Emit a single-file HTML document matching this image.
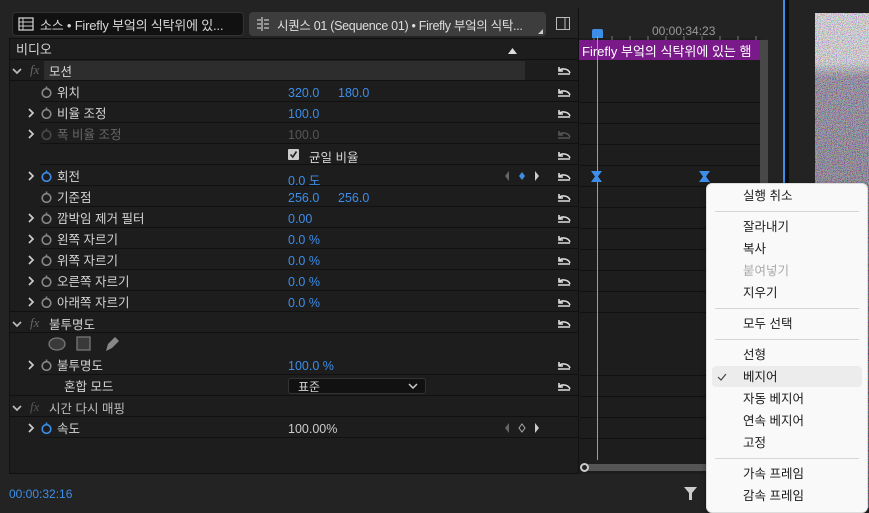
<!DOCTYPE html>
<html><head><meta charset="utf-8"><style>
*{margin:0;padding:0;box-sizing:border-box}
body{width:869px;height:508px;background:#232323;position:relative;overflow:hidden;font-family:"Liberation Sans","Noto Sans CJK KR",sans-serif;font-size:12.5px;color:#d4d4d4}
.a{position:absolute;white-space:nowrap}
.row{position:absolute;left:40px;width:538px;height:21px;border-bottom:1px solid #111}
.blue{color:#3d8ee8}
.rs{position:absolute;left:556px;width:16px;height:12px}
.sw{position:absolute;width:11px;height:12px}
.ch{position:absolute;left:27px;width:8px;height:10px}
.dn{position:absolute;left:12px;width:10px;height:8px}
.hl{position:absolute;left:580px;width:180px;height:1px;background:#111}
.mi{position:absolute;left:743px;color:#1a1a1a;font-size:12.5px}
.sep{position:absolute;left:715px;width:144px;height:1px;background:#d6d6d6}
</style></head><body>
<svg width="0" height="0" style="position:absolute"><defs>
<g id="sw"><circle cx="5.5" cy="7" r="4.3" fill="none" stroke="currentColor" stroke-width="1.6"/><line x1="5.5" y1="0.5" x2="5.5" y2="3" stroke="currentColor" stroke-width="1.6"/></g>
<g id="rs"><path d="M2 9H14M3 2V6H7M3 6C5 3 12 3 14 8" fill="none" stroke="currentColor" stroke-width="1.6"/></g>
<g id="ch"><path d="M2 1L6 5L2 9" fill="none" stroke="#ccc" stroke-width="1.7"/></g>
<g id="dn"><path d="M1 2L5 6L9 2" fill="none" stroke="#bbb" stroke-width="1.7"/></g>
</defs></svg>
<!-- top tabs -->
<div class="a" style="left:12px;top:12px;width:232px;height:24px;background:#111;border:1px solid #333;border-radius:4px"></div>
<svg class="a" style="left:18px;top:17px" width="16" height="14"><rect x="1" y="1" width="14" height="12" fill="none" stroke="#ccc" stroke-width="1.3"/><line x1="1" y1="5" x2="15" y2="5" stroke="#ccc"/><line x1="5" y1="1" x2="5" y2="13" stroke="#ccc"/><line x1="1" y1="9" x2="15" y2="9" stroke="#ccc"/></svg>
<div class="a" style="left:40px;top:15px;color:#d8d8d8;font-size:13px;letter-spacing:-0.2px">소스 • Firefly 부엌의 식탁위에 있...</div>
<div class="a" style="left:249px;top:12px;width:297px;height:24px;background:#3d3d3d;border-radius:4px"></div>
<svg class="a" style="left:256px;top:17px" width="14" height="14"><g stroke="#ccc" stroke-width="1.2"><line x1="6" y1="0" x2="6" y2="14"/><line x1="1" y1="3" x2="5" y2="3"/><line x1="8" y1="3" x2="13" y2="3"/><line x1="1" y1="7" x2="5" y2="7"/><line x1="8" y1="7" x2="13" y2="7"/><line x1="1" y1="11" x2="5" y2="11"/><line x1="8" y1="11" x2="13" y2="11"/></g></svg>
<div class="a" style="left:277px;top:15px;color:#dedede;font-size:12.5px;letter-spacing:-0.3px">시퀀스 01 (Sequence 01) • Firefly 부엌의 식탁...</div>
<svg class="a" style="left:538px;top:29px" width="5" height="5"><path d="M5 0L5 5L0 5Z" fill="#ccc"/></svg>
<svg class="a" style="left:556px;top:17px" width="14" height="13"><rect x="0.5" y="0.5" width="13" height="12" fill="none" stroke="#bbb"/><line x1="9" y1="0" x2="9" y2="13" stroke="#bbb"/></svg>
<!-- main panel -->
<div class="a" style="left:9px;top:38px;width:570px;height:436px;background:#1d1d1d;border:1px solid #111"></div>
<div class="a" style="left:9px;top:38px;width:570px;height:22px;border-bottom:1px solid #111"></div>
<div class="a" style="left:16px;top:39px;font-size:13px">비디오</div>
<svg class="a" style="left:508px;top:48px" width="9" height="6"><path d="M0 6L4.5 0L9 6Z" fill="#ddd"/></svg>
<div class="a" style="left:44px;top:61px;width:481px;height:19px;background:#2d2d2d"></div>
<div class="a" style="left:10px;top:80px;width:568px;height:1px;background:#111"></div>
<div class="row" style="top:81px"></div><div class="row" style="top:102px"></div><div class="row" style="top:123px"></div><div class="row" style="top:144px"></div><div class="row" style="top:165px"></div><div class="row" style="top:186px"></div><div class="row" style="top:207px"></div><div class="row" style="top:228px"></div><div class="row" style="top:249px"></div><div class="row" style="top:270px"></div><div class="row" style="top:291px;left:10px;width:568px"></div>
<div class="row" style="top:312px;left:10px;width:568px"></div>
<div class="row" style="top:354px"></div><div class="row" style="top:375px;left:10px;width:568px"></div><div class="row" style="top:396px;left:10px;width:568px"></div><div class="row" style="top:417px"></div>
<!-- headers -->
<svg class="dn" style="top:67px"><use href="#dn"/></svg>
<div class="a" style="left:30px;top:62px;color:#666;font-style:italic;font-family:'Liberation Serif',serif;font-size:13px">fx</div>
<div class="a" style="left:49px;top:61px">모션</div>
<svg class="dn" style="top:320px"><use href="#dn"/></svg>
<div class="a" style="left:30px;top:315px;color:#666;font-style:italic;font-family:'Liberation Serif',serif;font-size:13px">fx</div>
<div class="a" style="left:49px;top:314px">불투명도</div>
<svg class="dn" style="top:404px"><use href="#dn"/></svg>
<div class="a" style="left:30px;top:399px;color:#555;font-style:italic;font-family:'Liberation Serif',serif;font-size:13px">fx</div>
<div class="a" style="left:49px;top:398px;color:#bbb">시간 다시 매핑</div>
<!-- chevrons -->
<svg class="ch" style="top:108px"><use href="#ch"/></svg>
<svg class="ch" style="top:129px"><use href="#ch"/></svg>
<svg class="ch" style="top:171px"><use href="#ch"/></svg>
<svg class="ch" style="top:213px"><use href="#ch"/></svg>
<svg class="ch" style="top:234px"><use href="#ch"/></svg>
<svg class="ch" style="top:255px"><use href="#ch"/></svg>
<svg class="ch" style="top:276px"><use href="#ch"/></svg>
<svg class="ch" style="top:297px"><use href="#ch"/></svg>
<svg class="ch" style="top:360px"><use href="#ch"/></svg>
<svg class="ch" style="top:423px"><use href="#ch"/></svg>
<!-- stopwatches -->
<svg class="sw" style="left:41px;top:86px;color:#888"><use href="#sw"/></svg>
<svg class="sw" style="left:41px;top:107px;color:#888"><use href="#sw"/></svg>
<svg class="sw" style="left:41px;top:128px;color:#4a4a4a"><use href="#sw"/></svg>
<svg class="sw" style="left:41px;top:170px;color:#3d8ee8"><use href="#sw"/></svg>
<svg class="sw" style="left:41px;top:191px;color:#888"><use href="#sw"/></svg>
<svg class="sw" style="left:41px;top:212px;color:#888"><use href="#sw"/></svg>
<svg class="sw" style="left:41px;top:233px;color:#888"><use href="#sw"/></svg>
<svg class="sw" style="left:41px;top:254px;color:#888"><use href="#sw"/></svg>
<svg class="sw" style="left:41px;top:275px;color:#888"><use href="#sw"/></svg>
<svg class="sw" style="left:41px;top:296px;color:#888"><use href="#sw"/></svg>
<svg class="sw" style="left:41px;top:359px;color:#888"><use href="#sw"/></svg>
<svg class="sw" style="left:41px;top:422px;color:#3d8ee8"><use href="#sw"/></svg>
<!-- labels -->
<div class="a" style="left:57px;top:82px">위치</div>
<div class="a" style="left:57px;top:103px">비율 조정</div>
<div class="a" style="left:57px;top:124px;color:#666">폭 비율 조정</div>
<div class="a" style="left:57px;top:166px">회전</div>
<div class="a" style="left:57px;top:187px">기준점</div>
<div class="a" style="left:57px;top:208px">깜박임 제거 필터</div>
<div class="a" style="left:57px;top:229px">왼쪽 자르기</div>
<div class="a" style="left:57px;top:250px">위쪽 자르기</div>
<div class="a" style="left:57px;top:271px">오른쪽 자르기</div>
<div class="a" style="left:57px;top:292px">아래쪽 자르기</div>
<div class="a" style="left:57px;top:355px">불투명도</div>
<div class="a" style="left:64px;top:376px">혼합 모드</div>
<div class="a" style="left:57px;top:418px">속도</div>
<!-- values -->
<div class="a blue" style="left:288px;top:86px">320.0</div><div class="a blue" style="left:338px;top:86px">180.0</div>
<div class="a blue" style="left:288px;top:107px">100.0</div>
<div class="a" style="left:288px;top:128px;color:#555">100.0</div>
<div class="a" style="left:288px;top:149px;width:11px;height:11px;background:#ccc;border-radius:1px"></div>
<svg class="a" style="left:289px;top:150px" width="9" height="9"><path d="M1.5 4.5L3.8 7L7.5 1.5" fill="none" stroke="#222" stroke-width="1.6"/></svg>
<div class="a" style="left:309px;top:147px">균일 비율</div>
<div class="a blue" style="left:288px;top:170px">0.0 도</div>
<div class="a blue" style="left:288px;top:191px">256.0</div><div class="a blue" style="left:338px;top:191px">256.0</div>
<div class="a blue" style="left:288px;top:212px">0.00</div>
<div class="a blue" style="left:288px;top:233px">0.0 %</div>
<div class="a blue" style="left:288px;top:254px">0.0 %</div>
<div class="a blue" style="left:288px;top:275px">0.0 %</div>
<div class="a blue" style="left:288px;top:296px">0.0 %</div>
<div class="a blue" style="left:288px;top:359px">100.0 %</div>
<div class="a" style="left:288px;top:378px;width:138px;height:16px;background:#111;border:1px solid #333;border-radius:3px"></div>
<div class="a" style="left:298px;top:378px;font-size:12px">표준</div>
<svg class="a" style="left:408px;top:383px" width="10" height="6"><path d="M1 1L5 5L9 1" fill="none" stroke="#ccc" stroke-width="1.5"/></svg>
<div class="a" style="left:288px;top:422px;color:#ccc">100.00%</div>
<!-- keyframe nav -->
<svg class="a" style="left:504px;top:171px" width="40" height="10"><path d="M5 0L5 10L1 5Z" fill="#666"/><path d="M18 1L21 5L18 9L15 5Z" fill="#3d8ee8"/><path d="M31 0L35 5L31 10Z" fill="#ccc"/></svg>
<svg class="a" style="left:504px;top:423px" width="40" height="10"><path d="M5 0L5 10L1 5Z" fill="#666"/><path d="M18 1L21 5L18 9L15 5Z" fill="none" stroke="#aaa"/><path d="M31 0L35 5L31 10Z" fill="#ccc"/></svg>
<!-- mask icons -->
<svg class="a" style="left:48px;top:336px" width="75" height="16"><ellipse cx="9" cy="8" rx="8" ry="6" fill="#3a3a3a" stroke="#777" stroke-width="1.3"/><rect x="29" y="1" width="13" height="13" fill="#3a3a3a" stroke="#777" stroke-width="1.3"/><path d="M58 15L60 8L67 1L71 5L64 12Z" fill="#888"/></svg>
<!-- reset icons -->
<svg class="rs" style="top:65px;color:#ddd"><use href="#rs"/></svg>
<svg class="rs" style="top:87px;color:#ddd"><use href="#rs"/></svg>
<svg class="rs" style="top:108px;color:#ddd"><use href="#rs"/></svg>
<svg class="rs" style="top:129px;color:#555"><use href="#rs"/></svg>
<svg class="rs" style="top:150px;color:#ddd"><use href="#rs"/></svg>
<svg class="rs" style="top:171px;color:#ddd"><use href="#rs"/></svg>
<svg class="rs" style="top:192px;color:#ddd"><use href="#rs"/></svg>
<svg class="rs" style="top:213px;color:#ddd"><use href="#rs"/></svg>
<svg class="rs" style="top:234px;color:#ddd"><use href="#rs"/></svg>
<svg class="rs" style="top:255px;color:#ddd"><use href="#rs"/></svg>
<svg class="rs" style="top:276px;color:#ddd"><use href="#rs"/></svg>
<svg class="rs" style="top:297px;color:#ddd"><use href="#rs"/></svg>
<svg class="rs" style="top:318px;color:#ddd"><use href="#rs"/></svg>
<svg class="rs" style="top:360px;color:#ddd"><use href="#rs"/></svg>
<svg class="rs" style="top:381px;color:#ddd"><use href="#rs"/></svg>
<!-- timeline area -->
<div class="a" style="left:579px;top:38px;width:182px;height:436px;background:#1d1d1d"></div>
<div class="a" style="left:578px;top:8px;width:1px;height:466px;background:#111"></div>
<div class="a" style="left:579px;top:40px;width:181px;height:20px;background:#7a1a8a"></div>
<div class="a" style="left:582px;top:41px;color:#fff;font-size:13px;width:176px;overflow:hidden">Firefly 부엌의 식탁위에 있는 햄</div>
<div class="a" style="left:760px;top:40px;width:8px;height:422px;background:#484848"></div>
<div class="a" style="left:652px;top:24px;color:#999;font-size:12px">00:00:34:23</div>
<svg class="a" style="left:590px;top:32px" width="170" height="8"><g stroke="#777"><line x1="4" y1="4" x2="4" y2="8"/><line x1="22" y1="4" x2="22" y2="8"/><line x1="40" y1="4" x2="40" y2="8"/><line x1="58" y1="4" x2="58" y2="8"/><line x1="76" y1="4" x2="76" y2="8"/><line x1="94" y1="4" x2="94" y2="8"/><line x1="112" y1="4" x2="112" y2="8"/><line x1="130" y1="4" x2="130" y2="8"/><line x1="148" y1="4" x2="148" y2="8"/><line x1="166" y1="4" x2="166" y2="8"/></g></svg>
<div class="hl" style="top:102px"></div><div class="hl" style="top:123px"></div><div class="hl" style="top:144px"></div><div class="hl" style="top:165px"></div><div class="hl" style="top:186px"></div><div class="hl" style="top:207px"></div><div class="hl" style="top:228px"></div><div class="hl" style="top:249px"></div><div class="hl" style="top:270px"></div><div class="hl" style="top:291px"></div><div class="hl" style="top:312px"></div><div class="hl" style="top:375px"></div><div class="hl" style="top:396px"></div><div class="hl" style="top:417px"></div><div class="hl" style="top:438px"></div>
<div class="a" style="left:592px;top:29px;width:11px;height:9px;background:#3d8ee8;border-radius:2px 2px 0 0"></div>
<div class="a" style="left:597px;top:36px;width:1px;height:424px;background:#6aa7f0"></div>
<svg class="a" style="left:591px;top:171px" width="12" height="11"><path d="M0 0H11L7 5.5L11 11H0L4 5.5Z" fill="#3d8ee8"/></svg>
<svg class="a" style="left:699px;top:171px" width="12" height="11"><path d="M0 0H11L7 5.5L11 11H0L4 5.5Z" fill="#3d8ee8"/></svg>
<div class="a" style="left:584px;top:464px;width:126px;height:7px;background:#555"></div>
<div class="a" style="left:580px;top:463px;width:9px;height:9px;border-radius:50%;border:2px solid #ccc;background:#222"></div>
<div class="a" style="left:783px;top:0;width:2px;height:508px;background:#3d8ee8"></div>
<div class="a" style="left:785px;top:0;width:4px;height:508px;background:#0d0d0d"></div>
<!-- preview noise -->
<svg class="a" style="left:815px;top:13px" width="54" height="495"><defs><filter id="n" x="0" y="0" width="100%" height="100%"><feTurbulence type="fractalNoise" baseFrequency="1.2" numOctaves="1" seed="3"/><feComponentTransfer><feFuncR type="linear" slope="3" intercept="-1"/><feFuncG type="linear" slope="3" intercept="-1"/><feFuncB type="linear" slope="3" intercept="-1"/><feFuncA type="linear" slope="0" intercept="1"/></feComponentTransfer></filter><linearGradient id="g" x1="0" y1="0" x2="0" y2="1"><stop offset="0" stop-color="#e8e0ee"/><stop offset="0.1" stop-color="#e0dde8"/><stop offset="0.13" stop-color="#7a6f90"/><stop offset="1" stop-color="#4a3a56"/></linearGradient></defs><rect width="54" height="495" fill="url(#g)"/><rect width="54" height="495" filter="url(#n)" opacity="0.5"/></svg>
<!-- bottom -->
<div class="a" style="left:9px;top:487px;color:#3d8ee8;font-size:12px">00:00:32:16</div>
<svg class="a" style="left:684px;top:487px" width="13" height="13"><path d="M0 0H13L8 6V13H5V6Z" fill="#ccc"/></svg>
<!-- context menu -->
<div class="a" style="left:706px;top:183px;width:162px;height:330px;background:#f9f9f9;border:1px solid #ddd;border-radius:6px;box-shadow:0 2px 6px rgba(0,0,0,.4)"></div>
<div class="mi" style="top:185px">실행 취소</div>
<div class="sep" style="top:211px"></div>
<div class="mi" style="top:216px">잘라내기</div>
<div class="mi" style="top:238px">복사</div>
<div class="mi" style="top:260px;color:#aaa">붙여넣기</div>
<div class="mi" style="top:282px">지우기</div>
<div class="sep" style="top:308px"></div>
<div class="mi" style="top:313px">모두 선택</div>
<div class="sep" style="top:339px"></div>
<div class="a" style="left:712px;top:366px;width:150px;height:21px;background:#ececec;border-radius:4px"></div>
<div class="mi" style="top:344px">선형</div>
<svg class="a" style="left:717px;top:373px" width="10" height="8"><path d="M1 4L4 7L9 1" fill="none" stroke="#444" stroke-width="1.2"/></svg>
<div class="mi" style="top:366px">베지어</div>
<div class="mi" style="top:388px">자동 베지어</div>
<div class="mi" style="top:410px">연속 베지어</div>
<div class="mi" style="top:432px">고정</div>
<div class="sep" style="top:458px"></div>
<div class="mi" style="top:463px">가속 프레임</div>
<div class="mi" style="top:485px">감속 프레임</div>
</body></html>
